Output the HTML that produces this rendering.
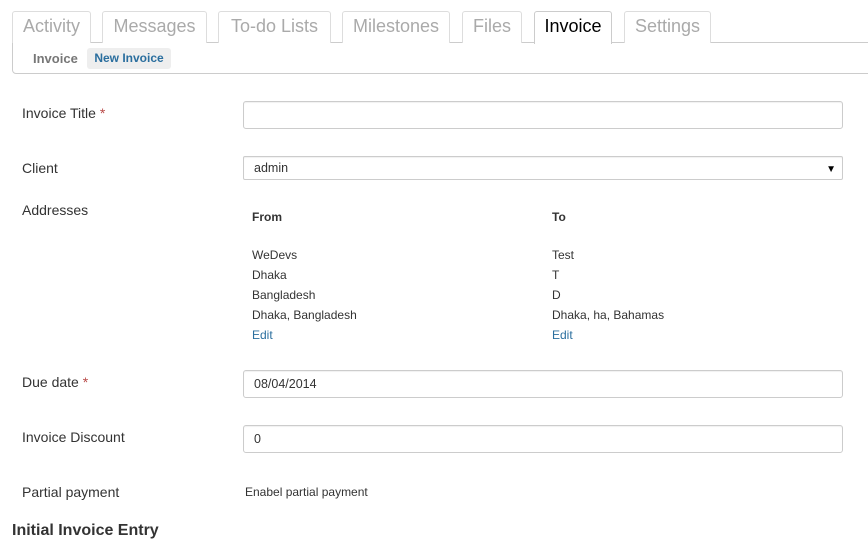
<!DOCTYPE html>
<html><head><style>
*{box-sizing:border-box}
body{margin:0;width:868px;height:545px;background:#fff;font-family:"Liberation Sans",Arial,sans-serif;position:relative;overflow:hidden;color:#333}
.a{position:absolute}
.tab{position:absolute;top:11px;height:32px;border:1px solid #ddd;border-bottom:none;border-radius:3px 3px 0 0;font-size:18px;color:#aaa;text-align:center;line-height:29px;background:#fff}
.sub{position:absolute;left:12px;top:42px;width:870px;height:32px;border:1px solid #ccc;border-radius:0 0 0 4px}
.lbl{position:absolute;left:22px;font-size:14px;color:#333}
.inp{position:absolute;left:243px;width:600px;height:28px;border:1px solid #ccc;border-radius:3px;font-size:12.5px;padding-left:10px;line-height:26px;color:#333;box-shadow:inset 0 1px 1px rgba(0,0,0,.06)}
.s{position:absolute;font-size:12px;color:#333}
.e{color:#2a6e9e}
.r{color:#b94a48}
</style></head><body>
<div class="sub"></div>
<div class="tab" style="left:12px;width:79px">Activity</div>
<div class="tab" style="left:102px;width:105px">Messages</div>
<div class="tab" style="left:218px;width:113px">To-do Lists</div>
<div class="tab" style="left:342px;width:108px">Milestones</div>
<div class="tab" style="left:462px;width:60px">Files</div>
<div class="tab" style="left:534px;width:78px;height:33px;border-color:#ccc;color:#000;z-index:2">Invoice</div>
<div class="tab" style="left:624px;width:87px">Settings</div>
<div class="a" style="left:33px;top:51px;font-size:13px;font-weight:bold;color:#777">Invoice</div>
<div class="a" style="left:87px;top:48px;width:84px;height:21px;background:#eee;border-radius:3px;font-size:12px;font-weight:bold;color:#2a6e9e;line-height:21px;text-align:center">New Invoice</div>

<div class="lbl" style="top:105px">Invoice Title <span class="r">*</span></div>
<div class="inp" style="top:101px"></div>
<div class="lbl" style="top:160px">Client</div>
<div class="inp" style="top:156px;height:24px;line-height:23px;border-radius:2px">admin<span style="position:absolute;right:6px;top:1px;font-size:10px;color:#000">▼</span></div>
<div class="lbl" style="top:202px">Addresses</div>
<div class="s" style="left:252px;top:210px;font-weight:bold">From</div>
<div class="s" style="left:552px;top:210px;font-weight:bold">To</div>
<div class="s" style="left:252px;top:245px;line-height:20px">WeDevs<br>Dhaka<br>Bangladesh<br>Dhaka, Bangladesh<br><span class="e">Edit</span></div>
<div class="s" style="left:552px;top:245px;line-height:20px">Test<br>T<br>D<br>Dhaka, ha, Bahamas<br><span class="e">Edit</span></div>
<div class="lbl" style="top:374px">Due date <span class="r">*</span></div>
<div class="inp" style="top:370px">08/04/2014</div>
<div class="lbl" style="top:429px">Invoice Discount</div>
<div class="inp" style="top:425px">0</div>
<div class="lbl" style="top:484px">Partial payment</div>
<div class="s" style="left:245px;top:485px">Enabel partial payment</div>
<div class="a" style="left:12px;top:522px;font-size:16px;font-weight:bold;color:#333">Initial Invoice Entry</div>
</body></html>
